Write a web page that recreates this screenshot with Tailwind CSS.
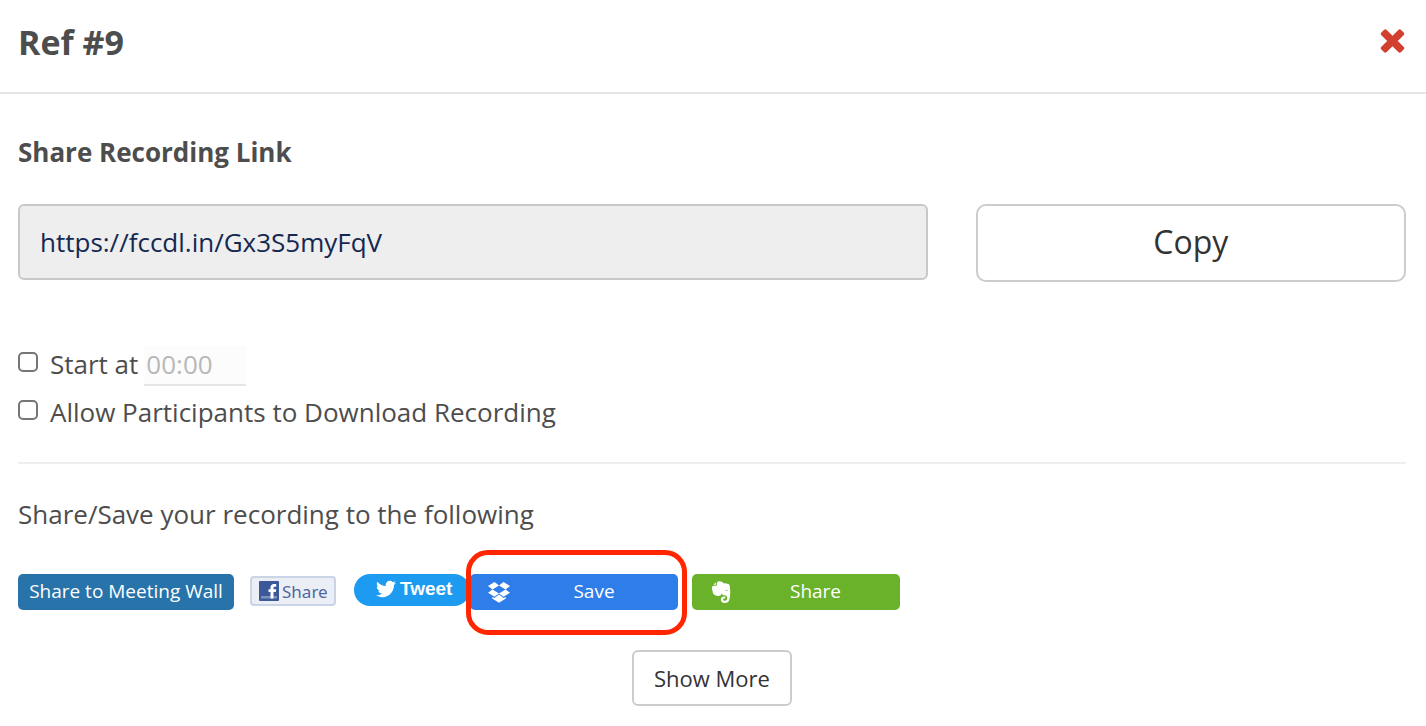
<!DOCTYPE html>
<html lang="en">
<head>
    <meta charset="UTF-8">
    <meta name="viewport" content="width=device-width, initial-scale=1.0">
    <title>Ref #9</title>
    <script src="https://cdn.jsdelivr.net/npm/@tailwindcss/browser@4"></script>
</head>
<body class="bg-white text-[#4d4d4d] text-[26px] leading-9 font-['Open_Sans',sans-serif]">
    <!-- Header -->
    <header class="flex items-center justify-between border-b-2 border-[#e5e5e5] pt-[18px] pb-6 pl-[18px] pr-5">
        <h1 class="pb-0.5 text-[34px] leading-12 font-bold">Ref #9</h1>
        <button type="button" aria-label="Close" class="pb-1">
            <svg class="w-[26px] h-6" viewBox="0 0 26 24" fill="#d2402f">
                <path d="M3.900 .9Q5.300-.5 6.700.9L12.500 6.700L18.300.9Q19.700-.5 21.100.9L23.600 3.400Q25 4.800 23.600 6.200L17.800 12L23.600 17.800Q25 19.200 23.600 20.600L21.100 23.100Q19.700 24.500 18.300 23.100L12.500 17.300L6.700 23.100Q5.300 24.500 3.900 23.100L1.400 20.600Q0 19.200 1.400 17.800L7.200 12L1.400 6.200Q0 4.800 1.400 3.400z"></path>
            </svg>
        </button>
    </header>

    <main class="pl-[18px] pr-5 pt-10 pb-5">
        <!-- Link -->
        <h2 class="mb-[34px] font-bold"><label for="link">Share Recording Link</label></h2>
        <div class="flex items-start gap-12">
            <input id="link" type="text" readonly value="https://fccdl.in/Gx3S5myFqV" class="flex-1 min-w-0 h-[76px] rounded-md border-2 border-[#c8c8c8] bg-[#eeeeee] px-5 text-[#142850]" />
            <button id="copyBtn" type="button" class="w-[31%] h-[78px] rounded-[10px] border-2 border-[#cccccc] pb-0.5 text-[32px] text-[#333333]">Copy</button>
        </div>

        <!-- Options -->
        <div class="mt-16 flex items-start">
            <input id="startAt" type="checkbox" class="mt-1.5 mr-3 size-5 appearance-none rounded-[5px] border-2 border-[#767676] bg-white checked:bg-blue-600" />
            <label for="startAt">Start at</label>
            <input type="text" aria-label="Start time" placeholder="00:00" class="ml-1.5 w-[102px] h-10 border-b-2 border-[#e5e5e5] bg-[#fcfcfc] px-0.5 pb-0.5 placeholder:text-[#b8b8b8]" />
        </div>
        <div class="mt-2 flex items-start">
            <input id="allowDownload" type="checkbox" class="mt-1.5 mr-3 size-5 appearance-none rounded-[5px] border-2 border-[#767676] bg-white checked:bg-blue-600" />
            <label for="allowDownload">Allow Participants to Download Recording</label>
        </div>

        <hr class="mt-8 mb-8 border-t-2 border-[#eeeeee]">

        <!-- Share buttons -->
        <p>Share/Save your recording to the following</p>
        <div class="mt-[42px] flex items-start text-[19px] leading-9 text-white">
            <button type="button" class="h-9 w-[216px] rounded-[5px] bg-[#2873a9] pb-0.5 leading-8">Share to Meeting Wall</button>
            <button type="button" class="mt-0.5 ml-4 flex h-[30px] w-[86px] items-center gap-[3px] rounded-[4px] border-2 border-[#cad4e7] bg-[#eceef5] pl-[7px] font-['Noto_Sans',sans-serif] text-[17px] text-[#4f68a3]">
                <svg class="size-5 shrink-0" viewBox="0 0 20 20">
                    <rect width="20" height="20" rx="1" fill="#3b5998"></rect>
                    <path fill="#7b90bf" d="M2 15h16v2.500H2z"></path>
                    <path fill="#fff" d="M11.500 17.500v-6.500H9.500V8.200h2V6.600c0-2.400 1.300-3.600 3.600-3.600h2.100v2.700h-1.400c-1 0-1.300.4-1.300 1.200v1.300h2.700l-.4 2.800h-2.300v6.500z"></path>
                </svg>
                <span class="pt-0.5">Share</span>
            </button>
            <button type="button" class="ml-[18px] flex h-8 w-[116px] items-center gap-1 rounded-full bg-[#1d9bf0] pl-[22px] pb-0.5 font-['Liberation_Sans',sans-serif] font-bold">
                <svg class="size-5 shrink-0" viewBox="0 0 24 24" fill="#fff">
                    <path d="M23.954 4.569c-.885.389-1.83.654-2.825.775 1.014-.611 1.794-1.574 2.163-2.723-.951.555-2.005.959-3.127 1.184-.896-.959-2.173-1.559-3.591-1.559-2.717 0-4.92 2.203-4.92 4.917 0 .39.045.765.127 1.124C7.691 8.094 4.066 6.13 1.64 3.161c-.427.722-.666 1.561-.666 2.475 0 1.71.87 3.213 2.188 4.096-.807-.026-1.566-.248-2.228-.616v.061c0 2.385 1.693 4.374 3.946 4.827-.413.111-.849.171-1.296.171-.314 0-.615-.03-.916-.086.631 1.953 2.445 3.377 4.604 3.417-1.68 1.319-3.809 2.105-6.102 2.105-.39 0-.779-.023-1.17-.067 2.189 1.394 4.768 2.209 7.557 2.209 9.054 0 13.999-7.496 13.999-13.986 0-.209 0-.42-.015-.63.961-.689 1.8-1.56 2.46-2.548z"></path>
                </svg>
                Tweet
            </button>
            <div class="relative">
                <button type="button" class="flex h-9 w-52 items-center rounded-[5px] bg-[#2f7de9] pl-[18px]">
                    <svg class="w-[22px] h-[21px] shrink-0" viewBox="0 0 22 21" fill="#fff">
                        <path d="M6.500 0L11 3.400L4.500 7.400L0 4zM15.500 0L22 4L17.500 7.400L11 3.400zM4.500 7.400L11 11.400L6.500 14.800L0 10.800zM17.500 7.400L22 10.800L15.500 14.800L11 11.400zM11 12.600L15.500 16L17.800 14.900V16.400L11 20.700L4.200 16.400V14.900L6.500 16z"></path>
                        <path fill="#2f7de9" d="M11 4.600L15.600 7.400L11 10.200L6.400 7.400z"></path>
                    </svg>
                    <span class="flex-1 pb-0.5 leading-8">Save</span>
                </button>
                <!-- Highlight ring -->
                <span class="pointer-events-none absolute -top-6 -bottom-[25px] -left-1 -right-[9px] rounded-[22px] border-5 border-[#ff2600]"></span>
            </div>
            <button type="button" class="ml-3.5 flex h-9 w-52 items-center rounded-[5px] bg-[#69b22a] pl-5">
                <svg class="w-[19px] h-[22px] shrink-0" viewBox="0 0 19 22">
                    <path fill="#fff" d="M5.200 0.800C6 0 8.500-.1 10 .8C10.700 1.300 11 1.900 11.300 2.200C13 2.300 15.300 2.500 16.500 3.100C17.700 3.800 18.100 6 18.200 9C18.300 13 18 17.500 17 19.800C16.200 21.500 14.600 22 12.500 22C10.200 22 8.900 20.700 8.900 18.600C8.900 16.600 10.200 15.500 12 15.500H13.200V17.400H12.300C11.500 17.400 11.100 17.800 11.100 18.500C11.100 19.300 11.800 19.700 12.900 19.700C14.700 19.700 15.200 18.800 15.200 17C15.200 15.300 14.300 14.500 12.400 14.300C11 14.200 10.200 13.600 9.700 12.500C9.300 14.200 8.400 15.100 6.300 15C2.600 14.700 1.300 13.800.6 10.800C.1 8.700-.1 6.800.2 5.500C.5 4.900 1 4.700 1.700 4.700H4C4.600 4.700 4.900 4.400 4.900 3.800z"></path>
                    <path fill="#fff" d="M3.900 1.300V3.700H1.300z"></path>
                    <path fill="#69b22a" d="M13.200 9.900C13.400 8.500 15.400 8.500 15.900 10.200C15 9.800 14 9.700 13.200 9.900z"></path>
                </svg>
                <span class="flex-1 pb-0.5 leading-8">Share</span>
            </button>
        </div>

        <div class="mt-10 flex justify-center">
            <button type="button" class="h-14 w-40 rounded-md border-2 border-[#cccccc] text-[22px] text-[#333333]">Show More</button>
        </div>
    </main>

    <script>
        document.getElementById('copyBtn').addEventListener('click', () => {
            const link = document.getElementById('link');
            link.select();
            navigator.clipboard.writeText(link.value);
        });
    </script>
</body>
</html>
